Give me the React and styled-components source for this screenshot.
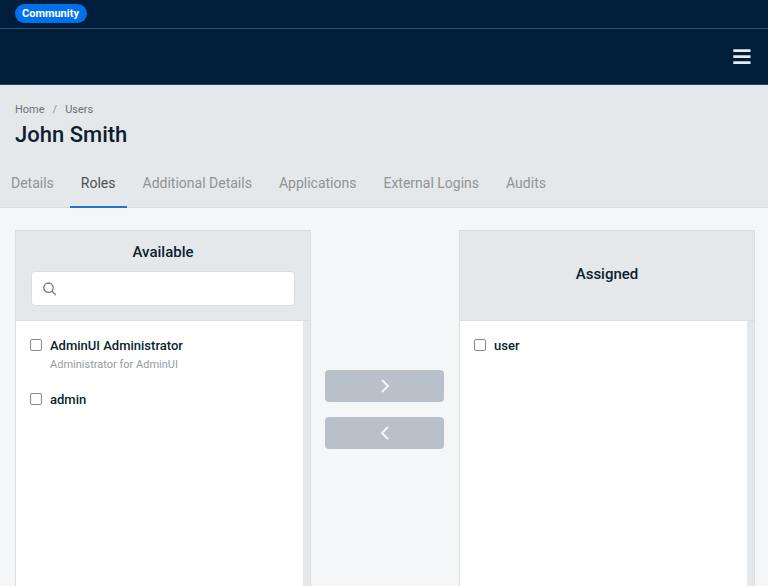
import React from "react";
import styled, { createGlobalStyle } from "styled-components";

const GlobalStyle = createGlobalStyle`
  *, *::before, *::after { box-sizing: border-box; }
  body {
    margin: 0;
    background: #f4f6f8;
    color: #0b1f2e;
    font-family: Roboto, "Liberation Sans", sans-serif;
    font-size: 13px;
  }
`;

const Page = styled.div`
  display: flex;
  flex-direction: column;
  min-height: 100vh;
`;

const TopBar = styled.div`
  display: flex;
  align-items: center;
  height: 29px;
  padding: 0 15px 2px;
  background: #001e3c;
  border-bottom: 1px solid #3a5068;
`;

const Badge = styled.span`
  padding: 0 8px 0 7px;
  border-radius: 10px;
  background: #0071eb;
  color: #fff;
  font-size: 11px;
  font-weight: 700;
  line-height: 19px;
`;

const NavBar = styled.header`
  display: flex;
  align-items: center;
  justify-content: flex-end;
  height: 56px;
  padding: 0 16px;
  background: #001e3c;
  border-bottom: 1px solid #2a415a;
`;

const MenuButton = styled.button`
  display: flex;
  padding: 0;
  border: 0;
  background: none;
  color: #e6ebf0;
  cursor: pointer;
`;

const PageHead = styled.div`
  background: #e4e8eb;
  border-bottom: 1px solid #d9dee2;
`;

const Crumbs = styled.nav`
  display: flex;
  gap: 8px;
  padding: 17px 15px 0;
  color: #8b9297;
  font-size: 11px;
  line-height: 16px;
`;

const Crumb = styled.a`
  color: #6b7176;
  text-decoration: none;
`;

const Title = styled.h1`
  margin: 0;
  padding: 2px 15px 0;
  font-size: 22px;
  font-weight: 500;
  line-height: 30px;
`;

const Tabs = styled.nav`
  display: flex;
  gap: 5px;
  margin-top: 10px;
  margin-bottom: -1px;
`;

const Tab = styled.a`
  padding: 0 11px;
  border-bottom: 2px solid ${(p) => (p.$active ? "#2176cc" : "transparent")};
  color: ${(p) => (p.$active ? "#4b5054" : "#8d9498")};
  font-size: 14px;
  line-height: 46px;
  text-decoration: none;
  white-space: nowrap;
`;

const Transfer = styled.main`
  flex: 1;
  display: grid;
  grid-template-columns: 2fr 1fr 2fr;
  padding: 22px 13px 0 15px;
`;

const Panel = styled.section`
  display: flex;
  flex-direction: column;
  border: 1px solid #d9dee2;
  border-bottom: 0;
  background: #e4e8eb;
`;

const PanelHead = styled.div`
  display: flex;
  flex-direction: column;
  align-items: stretch;
  justify-content: center;
  gap: 9px;
  height: 90px;
  padding: 0 15px 3px;
  border-bottom: 1px solid #d9dee2;
`;

const PanelTitle = styled.h2`
  margin: 0;
  font-size: 15px;
  font-weight: 500;
  line-height: 20px;
  text-align: center;
`;

const SearchBox = styled.label`
  display: flex;
  align-items: center;
  gap: 8px;
  height: 35px;
  padding: 0 11px;
  border: 1px solid #d9dee2;
  border-radius: 4px;
  background: #fff;
  color: #75797c;
`;

const SearchInput = styled.input`
  flex: 1;
  min-width: 0;
  border: 0;
  outline: 0;
  background: none;
  font: inherit;
`;

const RoleList = styled.ul`
  flex: 1;
  display: flex;
  flex-direction: column;
  gap: 16px;
  margin: 0 7px 0 0;
  padding: 16px 14px;
  background: #fff;
  list-style: none;
`;

const Role = styled.label`
  display: flex;
  align-items: flex-start;
  gap: 8px;
`;

const Check = styled.input`
  appearance: none;
  width: 12px;
  height: 12px;
  margin: 2px 0 0;
  border: 1px solid #858a8d;
  border-radius: 2px;
  background: #fff;
  &:checked { background: #2176cc; }
`;

const RoleName = styled.span`
  display: block;
  font-weight: 500;
  line-height: 18px;
`;

const RoleNote = styled.span`
  display: block;
  color: #949b9f;
  font-size: 11px;
  line-height: 20px;
`;

const Moves = styled.div`
  display: flex;
  flex-direction: column;
  gap: 15px;
  padding: 140px 15px 0 14px;
`;

const MoveButton = styled.button`
  display: flex;
  align-items: center;
  justify-content: center;
  height: 32px;
  padding: 0;
  border: 0;
  border-radius: 4px;
  background: #b8c0ca;
  color: #f4f6f8;
`;

const TABS = ["Details", "Roles", "Additional Details", "Applications", "External Logins", "Audits"];

const AVAILABLE = [
  { name: "AdminUI Administrator", note: "Administrator for AdminUI" },
  { name: "admin" },
];

const ASSIGNED = [{ name: "user" }];

function Roles({ items }) {
  return (
    <RoleList>
      {items.map((role) => (
        <li key={role.name}>
          <Role>
            <Check type="checkbox" />
            <span>
              <RoleName>{role.name}</RoleName>
              {role.note && <RoleNote>{role.note}</RoleNote>}
            </span>
          </Role>
        </li>
      ))}
    </RoleList>
  );
}

function Chevron({ d }) {
  return (
    <svg width="16" height="16" viewBox="0 0 16 16" fill="none" stroke="currentColor" strokeWidth="2" aria-hidden="true">
      <path d={d} />
    </svg>
  );
}

export default function App() {
  return (
    <Page>
      <GlobalStyle />
      <TopBar>
        <Badge>Community</Badge>
      </TopBar>
      <NavBar>
        <MenuButton type="button" aria-label="Menu">
          <svg width="20" height="18" viewBox="0 0 20 18" fill="currentColor" aria-hidden="true">
            <path d="M1.3 1.2h17.2v2.9H1.3zM1.3 7.2h17.2v2.9H1.3zM1.3 13.2h17.2v2.9H1.3z" />
          </svg>
        </MenuButton>
      </NavBar>
      <PageHead>
        <Crumbs aria-label="Breadcrumb">
          <Crumb href="#home">Home</Crumb>
          <span>/</span>
          <Crumb href="#users">Users</Crumb>
        </Crumbs>
        <Title>John Smith</Title>
        <Tabs>
          {TABS.map((tab) => (
            <Tab key={tab} href="#" $active={tab === "Roles"}>{tab}</Tab>
          ))}
        </Tabs>
      </PageHead>
      <Transfer>
        <Panel>
          <PanelHead>
            <PanelTitle>Available</PanelTitle>
            <SearchBox>
              <svg width="14" height="14" viewBox="0 0 14 14" fill="none" stroke="currentColor" strokeWidth="1.3" aria-hidden="true">
                <circle cx="5.5" cy="5.7" r="4.7" />
                <path d="M8.8 9l4 4" />
              </svg>
              <SearchInput type="text" aria-label="Search available roles" />
            </SearchBox>
          </PanelHead>
          <Roles items={AVAILABLE} />
        </Panel>
        <Moves>
          <MoveButton type="button" aria-label="Assign selected">
            <Chevron d="M5 2l6 6-6 6" />
          </MoveButton>
          <MoveButton type="button" aria-label="Remove selected">
            <Chevron d="M11 2L5 8l6 6" />
          </MoveButton>
        </Moves>
        <Panel>
          <PanelHead>
            <PanelTitle>Assigned</PanelTitle>
          </PanelHead>
          <Roles items={ASSIGNED} />
        </Panel>
      </Transfer>
    </Page>
  );
}
